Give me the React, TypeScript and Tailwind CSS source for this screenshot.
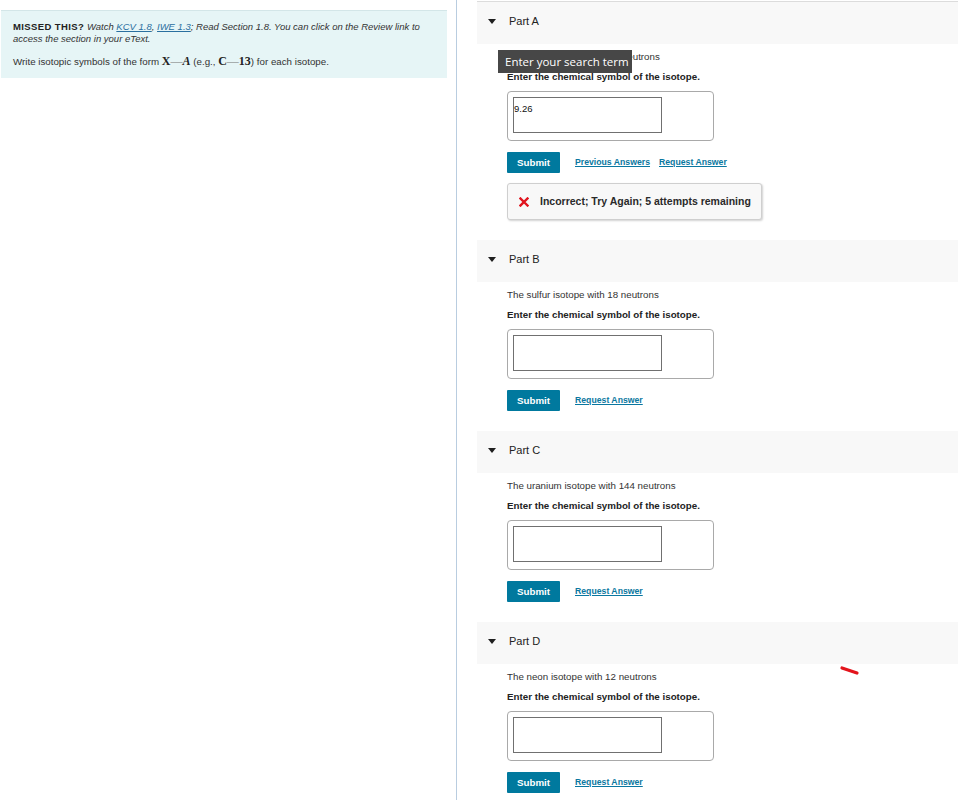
import React from "react";

const sans = { fontFamily: '"Liberation Sans", Arial, sans-serif' };
const serif = { fontFamily: '"Liberation Serif", "Times New Roman", serif' };

function Triangle() {
  return (
    <svg width="8" height="5" viewBox="0 0 8 5" className="block">
      <path d="M0 0 H8 L4 5 Z" fill="#1f1f1f" />
    </svg>
  );
}

function Header({ label, first }: { label: string; first?: boolean }) {
  return (
    <div
      className={
        "bg-[#f8f8f8] flex items-start pt-[12px] " +
        (first ? "h-[43px] border-t border-[#dcdcdc]" : "h-[42px]")
      }
    >
      <div className="w-[32px] pl-[11px] pt-[5px]">
        <Triangle />
      </div>
      <span className="text-[11px] leading-[14px] text-[#222]">{label}</span>
    </div>
  );
}

function AnswerBox({ value }: { value?: string }) {
  return (
    <div className="mt-[8px] w-[207px] h-[50px] border border-[#a9a9a9] rounded-[4px] pl-[5px] pt-[5px]">
      <div className="w-[149px] h-[36px] border-[1.5px] border-[#707070] bg-white text-[9.5px] leading-[12px] text-[#111] pt-[5px]">
        {value}
      </div>
    </div>
  );
}

function Actions({ prev }: { prev?: boolean }) {
  return (
    <div className="mt-[11px] flex items-center h-[21px]">
      <button className="w-[53px] h-[21px] bg-[#00799e] text-white font-bold text-[9.75px] leading-[21px] rounded-[1px]">
        Submit
      </button>
      {prev && (
        <a className="ml-[15px] text-[8.7px] font-bold text-[#0a77a0] underline underline-offset-[1px]">
          Previous Answers
        </a>
      )}
      <a
        className={
          (prev ? "ml-[9px] " : "ml-[15px] ") +
          "text-[8.7px] font-bold text-[#0a77a0] underline underline-offset-[1px]"
        }
      >
        Request Answer
      </a>
    </div>
  );
}

function Part({
  label,
  text,
  first,
  value,
  feedback,
  tooltip,
}: {
  label: string;
  text: string;
  first?: boolean;
  value?: string;
  feedback?: boolean;
  tooltip?: boolean;
}) {
  return (
    <section>
      <Header label={label} first={first} />
      <div className="relative pl-[30px] pb-[20px]">
        <p className="pt-[7px] text-[9.75px] leading-[12px] text-[#333]">{text}</p>
        <p className="mt-[8px] text-[9.75px] leading-[12px] font-bold text-[#222]">
          Enter the chemical symbol of the isotope.
        </p>
        <AnswerBox value={value} />
        <Actions prev={feedback} />
        {feedback && (
          <div className="mt-[10px] w-[255px] h-[37px] border border-[#cfcfcf] rounded-[3px] bg-[#f8f8f8] shadow-[1px_1px_2px_rgba(0,0,0,0.18)] flex items-center pl-[11px]">
            <svg width="10" height="10" viewBox="0 0 10 10">
              <path d="M1.5 1.5 L8.5 8.5 M8.5 1.5 L1.5 8.5" stroke="#e0141e" strokeWidth="2.4" strokeLinecap="square" />
            </svg>
            <span className="ml-[11px] text-[10.5px] font-bold text-[#2a2a2a]">
              Incorrect; Try Again; 5 attempts remaining
            </span>
          </div>
        )}
        {tooltip && (
          <div
            className="absolute left-[21px] top-[6px] h-[23px] w-[134px] bg-[#474747] text-white text-[11.5px] leading-[23px] pl-[7px]"
            style={{ fontFamily: '"Open Sans", "Noto Sans", sans-serif' }}
          >
            Enter your search term
          </div>
        )}
      </div>
    </section>
  );
}

export default function App() {
  return (
    <div className="relative flex h-[800px] w-[958px] overflow-hidden bg-white" style={sans}>
      <aside className="w-[457px] shrink-0 border-r border-[#b9cde0]">
        <div className="ml-[1px] mt-[10px] w-[446px] bg-[#e6f5f6] border-t border-[#d3e6e8] px-[12px] pt-[10px] pb-[8px] text-[#333]">
          <p className="text-[9.5px] leading-[12px]">
            <span className="font-bold text-[#222] tracking-[0.4px]">MISSED THIS?</span>{" "}
            <i>
              Watch <a className="underline text-[#2a6f9f]">KCV 1.8</a>,{" "}
              <a className="underline text-[#2a6f9f]">IWE 1.3</a>; Read Section 1.8. You can click on the Review link to
              access the section in your eText.
            </i>
          </p>
          <p className="mt-[8px] text-[9.75px] leading-[16px]">
            Write isotopic symbols of the form{" "}
            <span className="text-[12px] text-[#222]" style={serif}>
              <b>X</b>
              <span className="text-[#777]">—</span>
              <b className="italic">A</b>
            </span>{" "}
            (e.g.,{" "}
            <span className="text-[12px] text-[#222]" style={serif}>
              <b>C</b>
              <span className="text-[#777]">—</span>
              <b>13</b>
            </span>
            ) for each isotope.
          </p>
        </div>
      </aside>
      <main className="flex-1 pl-[20px] pt-[1px]">
        <Part label="Part A" first text="The nickel isotope with 30 neutrons" value="9.26" feedback tooltip />
        <Part label="Part B" text="The sulfur isotope with 18 neutrons" />
        <Part label="Part C" text="The uranium isotope with 144 neutrons" />
        <Part label="Part D" text="The neon isotope with 12 neutrons" />
      </main>
      <svg className="absolute left-[838px] top-[664px]" width="24" height="14" viewBox="0 0 24 14">
        <path d="M4 4 L19 9" stroke="#e3141c" strokeWidth="3.2" strokeLinecap="round" />
      </svg>
    </div>
  );
}
